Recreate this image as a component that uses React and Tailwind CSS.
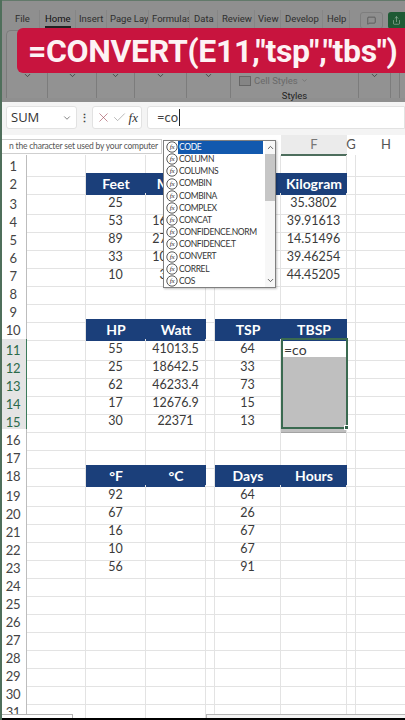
import { ChevronDown, ChevronUp, X, Check, MessageSquare, Share } from "lucide-react"

const TABS = [
  ["File", "w-[40px]", "pl-[15px]"],
  ["Home", "w-[36px]", "pl-[5px]"],
  ["Insert", "w-[31px]", "pl-[3px]"],
  ["Page Lay", "w-[42px]", "pl-[3px]"],
  ["Formulas", "w-[41px]", "pl-[3px]"],
  ["Data", "w-[28px]", "pl-[4px]"],
  ["Review", "w-[37px]", "pl-[4px]"],
  ["View", "w-[26px]", "pl-[3px]"],
  ["Develop", "w-[42px]", "pl-[4px]"],
  ["Help", "w-[27px]", "pl-[4px]"],
]

const FUNCS = ["CODE", "COLUMN", "COLUMNS", "COMBIN", "COMBINA", "COMPLEX", "CONCAT", "CONFIDENCE.NORM", "CONFIDENCE.T", "CONVERT", "CORREL", "COS"]

// row number -> cells in columns B..G (index 1..6 of the grid)
const DATA = {
  2: { head: ["", "Feet", "Meter", "", "", "Kilogram"] },
  3: { cells: ["", "25", "", "", "", "35.3802"] },
  4: { cells: ["", "53", "16.1544", "", "", "39.91613"] },
  5: { cells: ["", "89", "27.1272", "", "", "14.51496"] },
  6: { cells: ["", "33", "10.0584", "", "", "39.46254"] },
  7: { cells: ["", "10", "3.048", "", "", "44.45205"] },
  10: { head: ["", "HP", "Watt", "", "TSP", "TBSP"] },
  11: { cells: ["", "55", "41013.5", "", "64", ""] },
  12: { cells: ["", "25", "18642.5", "", "33", ""] },
  13: { cells: ["", "62", "46233.4", "", "73", ""] },
  14: { cells: ["", "17", "12676.9", "", "15", ""] },
  15: { cells: ["", "30", "22371", "", "13", ""] },
  18: { head: ["", "°F", "°C", "", "Days", "Hours"] },
  19: { cells: ["", "92", "", "", "64", ""] },
  20: { cells: ["", "67", "", "", "26", ""] },
  21: { cells: ["", "16", "", "", "67", ""] },
  22: { cells: ["", "10", "", "", "67", ""] },
  23: { cells: ["", "56", "", "", "91", ""] },
}

const ROWS = Array.from({ length: 31 }, (_, i) => i + 1)
const GRID = "grid grid-cols-[27px_59px_60px_60px_9px_66px_66px_9px_49px]"

function FnIcon() {
  return (
    <svg width="12" height="12" viewBox="0 0 12 12" className="shrink-0">
      <circle cx="6" cy="6" r="5.2" fill="#fff" stroke="#444" strokeWidth="0.9" />
      <text x="6" y="8.4" textAnchor="middle" fontSize="7" fontStyle="italic" fontFamily="Liberation Serif, serif" fill="#333">fx</text>
    </svg>
  )
}

function TopBar() {
  return (
    <div className="flex h-[30px] shrink-0 items-start border-t border-[#62796a] bg-[#8f8f8f] pt-[2px] font-['Roboto',sans-serif] text-[9.5px] text-[#2e2e2e]">
      {TABS.map(([name, w, pl]) => (
        <div key={name} className={`${w} ${pl} mt-[7px] h-[19px] shrink-0 overflow-hidden whitespace-nowrap border-r border-[#868686] pt-[2px] leading-[14px]`}>
          <span className={name === "Home" ? "inline-block border-b-2 border-[#222] text-[#111]" : ""}>{name}</span>
        </div>
      ))}
      <div className="ml-[10px] mt-[9px] flex h-[17px] w-[23px] items-center justify-center rounded-[3px] border border-[#7e7e7e]">
        <MessageSquare size={9} strokeWidth={1.4} color="#333" />
      </div>
      <div className="ml-[5px] mt-[9px] flex h-[17px] flex-1 items-center justify-center rounded-l-[3px] bg-[#1e5a34]">
        <Share size={9} strokeWidth={1.4} color="#b9cdbf" />
      </div>
    </div>
  )
}

function Ribbon() {
  const groups = ["w-[41px]", "w-[49px]", "w-[38px]", "w-[52px]", "w-[44px]"]
  return (
    <div className="flex h-[72px] shrink-0 bg-[#8f8f8f] pb-[4px] pl-[6px] font-['Roboto',sans-serif]">
      <div className="flex flex-1 rounded-tl-[5px] border-l border-t border-[#7c7c7c] bg-[#929292]">
        {groups.map((w, i) => (
          <div key={i} className={`${w} flex shrink-0 justify-center border-r border-[#7c7c7c] pt-[40px]`}>
            <ChevronDown size={9} strokeWidth={2} color="#333" />
          </div>
        ))}
        <div className="flex w-[128px] shrink-0 flex-col items-center border-r border-[#7c7c7c] pt-[43px]">
          <div className="flex items-center gap-[3px] self-start pl-[8px] text-[9.5px] leading-[13px] text-[#696969]">
            <span className="inline-block h-[10px] w-[12px] border border-[#666] bg-[#858585]" />
            Cell Styles
            <ChevronDown size={7} strokeWidth={2} color="#666" />
          </div>
          <div className="mt-[2px] text-[9.5px] leading-[13px] text-[#222]">Styles</div>
        </div>
        <div className="flex w-[32px] shrink-0 justify-center border-r border-[#7c7c7c] pt-[40px]">
          <ChevronDown size={9} strokeWidth={2} color="#333" />
        </div>
        <div className="w-[9px] shrink-0 border-r border-[#7c7c7c]" />
      </div>
    </div>
  )
}

function FormulaBar() {
  return (
    <div className="flex h-[33px] shrink-0 items-center bg-[#f4f4f4] pb-[4px] pl-[6px] pt-[2px]">
      <div className="flex h-[23px] w-[71px] shrink-0 items-center justify-between rounded-[3px] border border-[#e2e2e2] bg-white px-[4px] font-['Open_Sans',sans-serif] text-[13px] text-[#333]">
        SUM
        <ChevronDown size={10} strokeWidth={1.6} color="#444" />
      </div>
      <div className="w-[15px] shrink-0 text-center text-[11px] font-bold leading-none text-[#444]">⋮</div>
      <div className="flex h-[23px] w-[50px] shrink-0 items-center justify-between rounded-[3px] border border-[#e2e2e2] bg-white px-[3px]">
        <X size={15} strokeWidth={1} color="#a04a5a" />
        <Check size={15} strokeWidth={1} color="#909090" />
        <span className="font-['Liberation_Serif',serif] text-[13px] italic leading-none text-[#333]">fx</span>
      </div>
      <div className="ml-[5px] flex h-[23px] flex-1 items-center rounded-l-[3px] border border-[#e2e2e2] bg-white pl-[9px] text-[13px] text-[#444]">
        =co
        <span className="ml-[1px] inline-block h-[17px] w-px bg-[#222]" />
      </div>
    </div>
  )
}

function ColumnHeader() {
  return (
    <div className={`${GRID} h-[20px] shrink-0 bg-white text-[13px] leading-[19px] text-[#555]`}>
      <div className="col-span-6" />
      <div className="border-b-2 border-[#4d6e5d] bg-[#ebebeb] text-center text-[#777]">F</div>
      <div className="-ml-[1px] text-center">G</div>
      <div className="pl-[25px]">H</div>
    </div>
  )
}

function SheetRow({ n }) {
  const row = DATA[n]
  const isHead = !!row?.head
  const selected = n >= 11 && n <= 15
  const values = row?.head || row?.cells || ["", "", "", "", "", ""]
  const height = isHead ? "h-[20px]" : "h-[18px]"
  return (
    <div className={`${GRID} ${height} shrink-0`}>
      <div className={`flex items-center justify-center border-r pt-[2px] text-[13px] tracking-[-0.3px] ${selected ? "border-[#3d7a5b] bg-[#e4e4e4] text-[#2c6a4b]" : "border-[#bdbdbd] bg-white text-[#444]"}`}>{n}</div>
      {values.map((v, i) => {
        let cls = "border-r border-b border-[#e3e3e3] pt-[1px] text-[12.5px] text-[#3a3a3a]"
        if (isHead && i !== 0 && i !== 3) cls = "bg-[#1b3f7a] text-[14px] font-bold text-white"
        if (selected && i === 5 && n > 11) cls = "border-r border-b border-[#a3a3a3] bg-[#bfbfbf]"
        return (
          <div key={i} className={`${cls} flex items-center justify-center overflow-hidden whitespace-nowrap`}>
            {v}
          </div>
        )
      })}
      <div className="border-r border-b border-[#e3e3e3]" />
      <div className="border-b border-[#e3e3e3]" />
    </div>
  )
}

function Autocomplete() {
  return (
    <div className="absolute left-[161px] top-[140px] z-10 flex h-[148px] w-[113px] border border-[#808080] bg-white shadow-[1px_1px_2px_rgba(0,0,0,0.25)]">
      <div className="flex w-[101px] shrink-0 flex-col pl-[2px] pr-[2px]">
        {FUNCS.map((f, i) => (
          <div key={f} className="flex h-[12.2px] items-center text-[8.5px] leading-none tracking-[-0.35px] text-[#333]">
            <FnIcon />
            <span className={i === 0 ? "flex h-[13px] flex-1 items-center bg-[#1259ae] pl-[1px] text-white" : "pl-[1px]"}>{f}</span>
          </div>
        ))}
      </div>
      <div className="flex flex-1 flex-col items-center bg-[#f7f7f7]">
        <div className="flex h-[13px] items-center"><ChevronUp size={9} strokeWidth={2} color="#333" /></div>
        <div className="h-[47px] w-full bg-[#c6c6c6]" />
        <div className="flex-1" />
        <div className="flex h-[13px] items-center"><ChevronDown size={9} strokeWidth={2} color="#333" /></div>
      </div>
    </div>
  )
}

export default function App() {
  return (
    <div className="relative flex h-[720px] w-[405px] flex-col overflow-hidden border-l-2 border-[#4f6f5b] bg-white font-['Lato',sans-serif]">
      <div className="-ml-[2px] flex w-[405px] flex-1 flex-col overflow-hidden">
        <TopBar />
        <Ribbon />
        <FormulaBar />
        <ColumnHeader />
        <div className="h-0 flex-1">
          {ROWS.map((n) => <SheetRow key={n} n={n} />)}
        </div>
      </div>

      {/* red formula banner */}
      <div className="absolute left-[15px] top-[28px] z-20 flex h-[45px] w-[390px] items-center whitespace-nowrap rounded-l-[6px] bg-[#c8143e] pl-[11px] font-['Roboto',sans-serif] text-[32px] font-bold tracking-[-0.35px] text-[#fdf2f4]">
        =CONVERT(E11,"tsp","tbs")
      </div>

      {/* function hint */}
      <div className="absolute -left-[2px] top-[139px] z-10 flex h-[15px] w-[162px] items-center justify-end overflow-hidden whitespace-nowrap border border-[#cfcfcf] bg-white pr-[3px] text-[8.5px] tracking-[-0.2px] text-[#555]">
        n the character set used by your computer
      </div>

      <Autocomplete />

      {/* selection F11:F15 */}
      <div className="absolute left-[279px] top-[338px] z-[5] h-[91px] w-[67px] border-2 border-[#3a6a50]">
        <div className="pl-[1px] text-[14px] leading-[19px] text-[#3a3a3a]">=co</div>
        <div className="absolute -bottom-[3px] -right-[3px] h-[5px] w-[5px] border border-white bg-[#2f5f46]" />
      </div>

      {/* scrollbars at the bottom edge */}
      <div className="absolute -left-[2px] bottom-[2px] z-10 h-[4px] w-[73px] border-r border-t border-[#b5b5b5] bg-white" />
      <div className="absolute bottom-[2px] left-[204px] z-10 h-[4px] w-[201px] border-l border-t border-[#b5b5b5] bg-[#f4f4f4]" />
      <div className="absolute -left-[2px] bottom-0 z-10 h-[2px] w-[407px] bg-black" />
    </div>
  )
}
